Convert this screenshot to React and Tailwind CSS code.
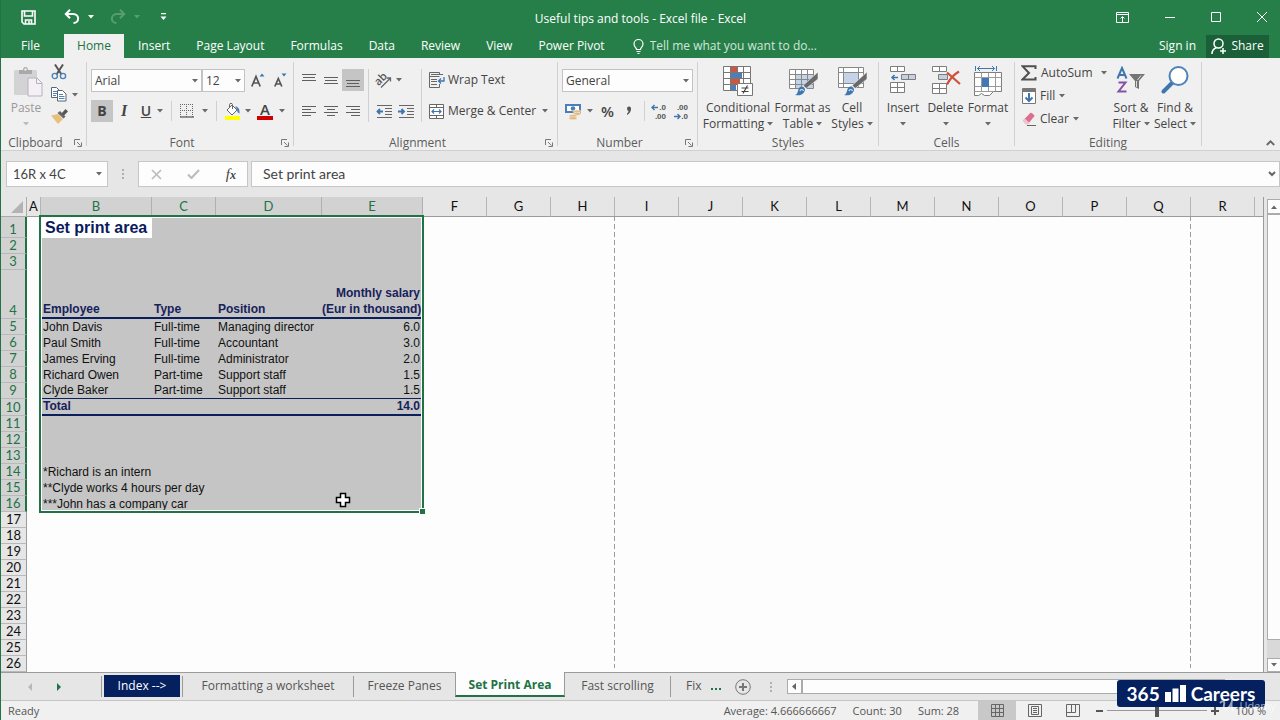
import React, { useState } from 'react';

// ==================================================================
// Sheet data
// ==================================================================
const columns = [
  { id: 'A', width: 'w-[14px]' },
  { id: 'B', width: 'w-[111px]', selected: true },
  { id: 'C', width: 'w-[64px]', selected: true },
  { id: 'D', width: 'w-[106px]', selected: true },
  { id: 'E', width: 'w-[101px]', selected: true },
  ...'FGHIJKLMNOPQR'.split('').map((id) => ({ id, width: 'w-[64px]' })),
];

const lastSelectedRow = 16;

const cells = {
  1: { B: 'Set print area' },
  4: { B: 'Employee', C: 'Type', D: 'Position' },
  5: { B: 'John Davis', C: 'Full-time', D: 'Managing director', E: '6.0' },
  6: { B: 'Paul Smith', C: 'Full-time', D: 'Accountant', E: '3.0' },
  7: { B: 'James Erving', C: 'Full-time', D: 'Administrator', E: '2.0' },
  8: { B: 'Richard Owen', C: 'Part-time', D: 'Support staff', E: '1.5' },
  9: { B: 'Clyde Baker', C: 'Part-time', D: 'Support staff', E: '1.5' },
  10: { B: 'Total', E: '14.0' },
  14: { B: '*Richard is an intern' },
  15: { B: '**Clyde works 4 hours per day' },
  16: { B: '***John has a company car' },
};

const rowHeights = { 1: 'h-[21px]', 4: 'h-[49px]', 10: 'h-[17px]' };

const rowStyles = {
  4: 'border-b-2 border-[#0a1f5c] font-bold text-[#16215c]',
  9: 'border-b border-[#0a1f5c]',
  10: 'border-b-2 border-[#0a1f5c] font-bold text-[#16215c]',
};

const menuTabs = ['Insert', 'Page Layout', 'Formulas', 'Data', 'Review', 'View', 'Power Pivot'];

// ==================================================================
// Small pieces
// ==================================================================
const Caret = ({ className = 'text-[#6a6a6a]' }) => (
  <svg width="6" height="4" viewBox="0 0 6 4" className={`shrink-0 ${className}`}>
    <path d="M0 0h6L3 3.5z" fill="currentColor" />
  </svg>
);

const Divider = ({ className = 'bg-[#d0d0d0]' }) => <div className={`w-px shrink-0 ${className}`} />;

const Dots = ({ className }) => (
  <svg width="2" height="10" viewBox="0 0 2 10" fill="#b0b0b0" className={`shrink-0 self-center ${className}`}>
    <path d="M0 0h2v2H0zM0 4h2v2H0zM0 8h2v2H0z" />
  </svg>
);

const Launcher = ({ label }) => (
  <button aria-label={label} className="text-[#777]">
    <svg width="8" height="8" viewBox="0 0 8 8" fill="none" stroke="currentColor">
      <path d="M.5 6V.5H6M3 3l3.5 3.5M7.5 3.5v4h-4" />
    </svg>
  </button>
);

const Group = ({ title, width, launcher, children }) => (
  <>
    <section aria-label={title} className={`flex shrink-0 flex-col ${width}`}>
      <div className="h-[77px]">{children}</div>
      <div className="flex h-[15px] items-center px-1 leading-[15px] text-[#5c5c5c]">
        <span className={`flex-1 text-center ${launcher ? 'pr-2' : ''}`}>{title}</span>
        {launcher && <Launcher label={`${title} settings`} />}
      </div>
    </section>
    <Divider className="my-1 bg-[#d0d0d0]" />
  </>
);

const Tool = ({ label, active, children }) => (
  <button
    aria-label={label}
    className={`flex h-[22px] w-[22px] shrink-0 items-center justify-center ${active ? 'bg-[#c5c5c5]' : ''}`}
  >
    {children}
  </button>
);

const BigButton = ({ icon, lines, width }) => (
  <button className={`flex shrink-0 flex-col items-center pt-2 leading-4 whitespace-nowrap ${width}`}>
    <span className="flex h-[34px] items-start justify-center">{icon}</span>
    <span>{lines[0]}</span>
    <span className="flex h-4 items-center gap-[3px]">
      {lines[1]}
      <Caret />
    </span>
  </button>
);

const Combo = ({ label, value, width }) => (
  <div className={`relative flex h-[23px] items-center ${width}`}>
    <select
      aria-label={label}
      defaultValue={value}
      className="h-full w-full appearance-none border border-[#c3c3c3] bg-[#fdfdfd] px-[3px] text-[12px] leading-4 text-[#444] outline-none"
    >
      <option>{value}</option>
    </select>
    <Caret className="pointer-events-none absolute right-1 text-[#6a6a6a]" />
  </div>
);

// Horizontal rules used by every alignment icon: [x, width] per line
const Lines = ({ rows, top = 1 }) => (
  <svg width="14" height="13" viewBox="0 0 14 13" shapeRendering="crispEdges">
    {rows.map(([x, w], i) => (
      <rect key={i} x={x} y={top + i * 3} width={w} height="1" fill="#5f5f5f" />
    ))}
  </svg>
);

const Indent = ({ flip }) => (
  <svg width="17" height="13" viewBox="0 0 17 13">
    <path d="M1 .5h15M9 3.5h7M9 6.5h7M9 9.5h7M1 12.5h15" stroke="#666" />
    <path
      d={flip ? 'M0 6.5h6M3.5 4L6 6.5 3.5 9' : 'M7 6.5H1.5M4 4L1.5 6.5 4 9'}
      fill="none"
      stroke="#3f76b0"
      strokeWidth="1.8"
    />
  </svg>
);

const DecimalIcon = ({ increase }) => (
  <svg width="16" height="19" viewBox="0 0 16 19" fontFamily="Liberation Sans, sans-serif" fontSize="8" fontWeight="bold" fill="#555">
    <text x="15" y="8" textAnchor="end">{increase ? '.0' : '.00'}</text>
    <text x="15" y="17" textAnchor="end">{increase ? '.00' : '.0'}</text>
    <path
      d={increase ? 'M7 5.5H1M3.5 3L1 5.500l2.500 2.500' : 'M1 14.5h6M4.500 12l2.500 2.500L4.500 17'}
      fill="none"
      stroke="#3f76b0"
      strokeWidth="1.4"
    />
  </svg>
);

// ==================================================================
// Ribbon icons
// ==================================================================
const PasteIcon = () => (
  <svg width="30" height="32" viewBox="0 0 30 32">
    <rect x="1" y="4" width="23" height="25" rx="1.5" fill="#d3d3d6" />
    <path d="M6 4h4c0-4 5-4 5 0h4v4H6z" fill="#a9a9a9" />
    <circle cx="12.5" cy="3.5" r="1.2" fill="#eee" />
    <path d="M15 12h9l5 5v13H15z" fill="#f5f0f5" stroke="#b9b0bd" />
    <path d="M23.5 12v5.5H29" fill="none" stroke="#b9b0bd" />
  </svg>
);

const CutIcon = () => (
  <svg width="16" height="16" viewBox="0 0 16 16" fill="none">
    <path d="M4 .5l6.5 10M12 .5l-6.5 10" stroke="#565656" strokeWidth="2" />
    <circle cx="3.800" cy="12" r="2.600" stroke="#4c82b8" strokeWidth="1.4" />
    <circle cx="12" cy="12" r="2.600" stroke="#4c82b8" strokeWidth="1.4" />
  </svg>
);

const CopyIcon = () => (
  <svg width="16" height="15" viewBox="0 0 16 15" fill="#fff" stroke="#5a6570">
    <path d="M.5.5h5l3 3v7h-8z" />
    <path d="M2 4.5h4M2 6.5h4M2 8.5h3" stroke="#4c82b8" />
    <path d="M6.5 3.5h5L15 7v7H6.5z" />
    <path d="M8 7.5h4M8 9.5h5.5M8 11.5h5.5" stroke="#4c82b8" />
  </svg>
);

const PainterIcon = () => (
  <svg width="17" height="15" viewBox="0 0 17 15">
    <path d="M0 6.5L7 5l5 5-5 5z" fill="#e9bf7c" />
    <path d="M6.500 4l2.500-2 5.500 5.500-2 2z" fill="#666" />
    <path d="M10.500 4.500L14.500 0 17 2.500l-4 4z" fill="#555" />
  </svg>
);

const BordersIcon = () => (
  <svg width="14" height="14" viewBox="0 0 14 14" stroke="#666">
    <path d="M0 .5h14M0 6.5h14M.5 0v13M6.5 0v13M12.5 0v13" strokeDasharray="1 1" />
    <path d="M0 13h14" strokeWidth="1.4" />
  </svg>
);

const FillColorIcon = () => (
  <svg width="17" height="17" viewBox="0 0 17 17" fill="none">
    <path d="M3 7l5-5 5 5-5 5z" fill="#fff" stroke="#666" />
    <path d="M5.5 5V1.500c0-1.500 3-1.500 3 0V6" stroke="#666" />
    <path d="M11 3.500c3 0 5 2 4.500 7-2-.5-2.500-2-2.500-4z" fill="#4c82b8" />
    <path d="M1 13h15v4H1z" fill="#ff0" />
  </svg>
);

const OrientationIcon = () => (
  <svg width="17" height="17" viewBox="0 0 17 17" className="overflow-visible">
    <text x="1" y="12" fontSize="11" fontWeight="600" fontFamily="Open Sans, sans-serif" fill="#555" transform="rotate(-45 5 10)">ab</text>
    <path d="M6 15.5L15.500 6M12 6h3.500v3.500" fill="none" stroke="#666" strokeWidth="1.3" />
  </svg>
);

const WrapIcon = () => (
  <svg width="16" height="16" viewBox="0 0 16 16" fill="none">
    <path d="M10.5 3V.5H.5v15h10V12M.5 4.500h10" stroke="#666" />
    <path d="M2 2.500h12M2 7.500h6M2 9.500h6M2 12.500h6" stroke="#666" />
    <path d="M15 5v4h-5M12 6.500L9.500 9l2.500 2.500" stroke="#3f76b0" strokeWidth="1.3" />
  </svg>
);

const MergeIcon = () => (
  <svg width="16" height="15" viewBox="0 0 16 15" fill="#fff">
    <path d="M.5.5h14v14H.5zM.5 3.500h14M.5 11.500h14M7.500.5v3M7.500 11.500v3" stroke="#666" />
    <path d="M3 7.500h9M5 5.500l-2 2 2 2M10 5.500l2 2-2 2" fill="none" stroke="#3f76b0" strokeWidth="1.2" />
  </svg>
);

const CurrencyIcon = () => (
  <svg width="17" height="17" viewBox="0 0 17 17">
    <path d="M0 1h16v9H0z" fill="#4c7fb5" />
    <path d="M2 3h12v5H2z" fill="#fff" />
    <circle cx="8" cy="5.500" r="2.300" fill="#4c7fb5" />
    <g fill="#e6b878" stroke="#f0f0f0" strokeWidth=".6">
      <ellipse cx="12" cy="8.500" rx="4" ry="1.600" />
      <ellipse cx="12" cy="10.800" rx="4" ry="1.600" />
      <ellipse cx="8" cy="13" rx="4" ry="1.600" />
      <ellipse cx="8" cy="15.200" rx="4" ry="1.600" />
    </g>
  </svg>
);

const ConditionalIcon = () => (
  <svg width="30" height="31" viewBox="0 0 30 31">
    <path d="M.5.5h27v24H.5z" fill="#fff" />
    <path d="M8 1h6v5H8zM8 13h9v5H8z" fill="#cf553f" />
    <path d="M8 7h11v5H8zM8 19h5v5H8z" fill="#4c7fb5" />
    <path d="M.5.5h27v24H.5zM.5 6.500h27M.5 12.500h27M.5 18.500h27M7.500.5v24M14.500.5v6M20.500.5v24" fill="none" stroke="#777" />
    <path d="M14.500 17.500h15v12h-15z" fill="#fff" stroke="#777" />
    <path d="M18.500 22h7M18.500 25.500h7M24.500 19.500l-4.500 8" stroke="#444" strokeWidth="1.2" />
  </svg>
);

// Paint brush laid over the table icons
const Brush = () => (
  <g>
    <path d="M30 6v7l-12.500 10-3-3z" fill="#6a6a6a" stroke="#eee" strokeWidth=".6" />
    <path d="M15 19l3.500 3.500-1.500 1.500-3.500-3.500z" fill="#f4f4f4" />
    <path d="M7 29c4-1 2-7 6-8.500 3-.5 5 2.500 3.500 5C15 29 10 30 7 29z" fill="#3f76b0" />
    <path d="M12 25c.5-2 3-2 3.500 0" fill="none" stroke="#dbe7f4" strokeWidth="1.2" />
  </g>
);

const TableIcon = () => (
  <svg width="30" height="31" viewBox="0 0 30 31">
    <path d="M1.500 3.500h24v19h-24z" fill="#fff" />
    <path d="M8 8h17v14H8z" fill="#c5d3e8" />
    <path d="M1.500 3.500h24v19h-24zM1.500 8.500h24M1.500 13.500h24M1.500 18.500h24M7.500 3.500v19M13.500 3.500v19M19.500 3.500v19" fill="none" stroke="#888" />
    <Brush />
  </svg>
);

const CellStyleIcon = () => (
  <svg width="30" height="31" viewBox="0 0 30 31">
    <path d="M1.500 1.500h25v20h-25z" fill="#fff" />
    <path d="M7 7h14v10H7z" fill="#c5d3e8" />
    <path d="M1.500 1.500h25v20h-25zM1.500 6.500h25M1.500 17.500h25M6.500 1.500v20M21.500 1.500v20" fill="none" stroke="#888" />
    <Brush />
  </svg>
);

const InsertIcon = () => (
  <svg width="28" height="30" viewBox="0 0 28 30" fill="#fff" stroke="#7d7d7d">
    <path d="M1.500.5h14v5h-14zM8.500.5v5M1.500 16.500h14v10h-14zM1.500 21.500h14M8.500 16.500v10" />
    <path d="M12.500 8.500h14v5h-14zM19.500 8.500v5" fill="#c9cfe2" />
    <path d="M9 11.500H3M5.500 9L3 11.500 5.500 14" fill="none" stroke="#3f76b0" strokeWidth="1.5" />
  </svg>
);

const DeleteIcon = () => (
  <svg width="30" height="30" viewBox="0 0 30 30" fill="#fff" stroke="#7d7d7d">
    <path d="M1.500.5h14v5h-14zM8.500.5v5M1.500 17.500h14v10h-14zM1.500 22.500h14M8.500 17.500v10" />
    <path d="M7.500 8.500h9v5h-9z" fill="#c9cfe2" />
    <path d="M16 6.500L29 18M28 5.500c-5 3-9 7-12 13" fill="none" stroke="#cf4f3c" strokeWidth="2.2" />
  </svg>
);

const FormatIcon = () => (
  <svg width="30" height="32" viewBox="0 0 30 32" fill="none">
    <path d="M2.500 0v5M23.500 0v5M4 2.500h18M7 0L4.500 2.500 7 5M19 0l2.500 2.500L19 5" stroke="#3f76b0" />
    <path d="M1.500 6.500h27v19h-8l-4 4h-5l-3-2-3 2h-4z" fill="#fff" stroke="#7d7d7d" />
    <path d="M1.500 11.500h27M1.500 20.500h27M8.500 6.500v19M15.500 6.500v19M22.500 6.500v19M1.500 25.500h19" stroke="#9a9a9a" />
    <path d="M9 12h7v9H9z" fill="#4178b5" />
  </svg>
);

const SigmaIcon = () => (
  <svg width="16" height="16" viewBox="0 0 16 16">
    <path d="M14.500 4V1.200H1.500L8 8l-6.500 6.500h13V12" fill="none" stroke="#505050" strokeWidth="2" />
  </svg>
);

const FillDownIcon = () => (
  <svg width="15" height="16" viewBox="0 0 15 16" fill="none">
    <path d="M1.500.5h13v15h-13z" fill="#fff" stroke="#777" />
    <path d="M2 1h12v3H2z" fill="#777" />
    <path d="M8 5v8M4.500 9.500L8 13l3.500-3.500" stroke="#3f76b0" strokeWidth="2" />
  </svg>
);

const EraserIcon = () => (
  <svg width="15" height="15" viewBox="0 0 15 15">
    <path d="M2 8.500L9.500.8c.6-.6 4.500 2.500 4 3.200L7 12H5z" fill="#d9708f" />
    <path d="M2 8.500l2-2L8.500 11 7 12.500H4.500z" fill="#efc3d0" />
    <path d="M6 13.500h9" stroke="#666" />
  </svg>
);

const SortIcon = () => (
  <svg width="30" height="31" viewBox="0 0 30 31">
    <path d="M1.500 12.500L6 2l4.500 10.500M3 9h6" fill="none" stroke="#3f76b0" strokeWidth="2" />
    <path d="M2.500 16.500h7l-7 9h8" fill="none" stroke="#8650a8" strokeWidth="2" />
    <path d="M13 8h16l-6 7v8l-4-2v-6z" fill="#757575" />
    <path d="M20.500 15v6M25 9.500L21.500 14" stroke="#ddd" />
  </svg>
);

const FindIcon = () => (
  <svg width="28" height="30" viewBox="0 0 28 30">
    <path d="M2.500 25.500l9-9" stroke="#3f76b0" strokeWidth="4" strokeLinecap="round" />
    <circle cx="17.500" cy="10" r="9" fill="#fff" stroke="#4c82b8" strokeWidth="2" />
  </svg>
);

// ==================================================================
// Title bar + tabs
// ==================================================================
const TitleBar = () => (
  <header className="relative flex h-[34px] items-center justify-between pl-5 text-white">
    <div className="flex items-center">
      <button aria-label="Save">
        <svg width="15" height="15" viewBox="0 0 15 15" fill="none" stroke="currentColor" strokeWidth="1.6">
          <path d="M1 1h13v13H3L1 12zM3.500 1v5h8V1M4.500 14v-4h6v4M8 11v3" />
        </svg>
      </button>
      <button aria-label="Undo" className="ml-7 flex items-center gap-2">
        <svg width="16" height="16" viewBox="0 0 16 16" fill="none" stroke="currentColor" strokeWidth="2">
          <path d="M6 .8L1.800 5 6 9.200M2 5h7c7 0 6.500 9 .5 9" />
        </svg>
        <Caret className="text-white" />
      </button>
      <button aria-label="Redo" className="ml-4 flex items-center gap-2 text-[#5a9c72]">
        <svg width="16" height="16" viewBox="0 0 16 16" fill="none" stroke="currentColor" strokeWidth="2">
          <path d="M10 .8L14.200 5 10 9.200M14 5H7C0 5 .5 14 6.500 14" />
        </svg>
        <Caret className="text-[#5a9c72]" />
      </button>
      <button aria-label="Customize Quick Access Toolbar" className="ml-5">
        <svg width="7" height="8" viewBox="0 0 7 8" fill="currentColor">
          <path d="M1 0h5v1.200H1zM.5 3.500h6l-3 3.500z" />
        </svg>
      </button>
    </div>
    <h1 className="absolute inset-x-0 top-[11px] mx-auto w-fit leading-4">Useful tips and tools - Excel file - Excel</h1>
    <div className="flex items-center pr-[13px]">
      <button aria-label="Ribbon Display Options">
        <svg width="13" height="11" viewBox="0 0 13 11" fill="none" stroke="currentColor">
          <path d="M.5.5h12v10H.5zM.5 2.500h12M6.500 10V5M4.500 6.500l2-2 2 2" />
        </svg>
      </button>
      <button aria-label="Minimize" className="ml-9">
        <svg width="10" height="10" viewBox="0 0 10 10" stroke="currentColor"><path d="M0 5.500h10" /></svg>
      </button>
      <button aria-label="Maximize" className="ml-9">
        <svg width="10" height="10" viewBox="0 0 10 10" fill="none" stroke="currentColor"><path d="M.5.5h9v9h-9z" /></svg>
      </button>
      <button aria-label="Close" className="ml-9">
        <svg width="10" height="10" viewBox="0 0 10 10" stroke="currentColor"><path d="M0 0l10 10M10 0L0 10" /></svg>
      </button>
    </div>
  </header>
);

const MenuTabs = () => (
  <nav className="flex h-6 items-center pr-[11px] leading-4 text-white">
    <div className="flex w-[63px] justify-center pr-1">
      <button>File</button>
    </div>
    <button className="flex h-6 w-[60px] items-center justify-center bg-[#f0f0f0] text-[#217346]">Home</button>
    <div className="flex gap-[26px] pl-[14px]">
      {menuTabs.map((tab) => (
        <button key={tab}>{tab}</button>
      ))}
    </div>
    <svg width="11" height="15" viewBox="0 0 11 15" fill="none" stroke="currentColor" className="ml-7 shrink-0">
      <path d="M3.500 10.500C3.500 8.500 1 8 1 5a4.500 4.500 0 019 0c0 3-2.500 3.500-2.500 5.500zM3.500 12.500h4M4.500 14.500h2" strokeWidth="1.2" />
    </svg>
    <input
      aria-label="Tell me what you want to do"
      placeholder="Tell me what you want to do..."
      className="ml-[6px] w-48 bg-transparent outline-none placeholder:text-[#d3e6da]"
    />
    <button className="ml-auto pr-[10px]">Sign in</button>
    <button className="flex h-[23px] w-[63px] items-center justify-center gap-1 bg-[#1a5f37]">
      <svg width="16" height="17" viewBox="0 0 16 17" fill="none" stroke="currentColor" strokeWidth="1.5">
        <circle cx="7.500" cy="5.500" r="4.500" />
        <path d="M1 16c0-4 2-5.500 4.500-6.500M12 10v6M9 13h6" />
      </svg>
      Share
    </button>
  </nav>
);

// ==================================================================
// Ribbon
// ==================================================================
const Ribbon = () => (
  <div className="flex h-[93px] overflow-hidden border-b border-[#d0d0d0] bg-[#f0f0f0] text-[#444]">
    <Group title="Clipboard" width="w-[85px]" launcher>
      <div className="flex">
        <button className="flex w-[50px] flex-col items-center pt-2 leading-4 text-[#999]">
          <span className="h-[34px] pl-1"><PasteIcon /></span>
          Paste
          <span className="flex h-4 items-center"><Caret className="text-[#bbb]" /></span>
        </button>
        <div className="flex flex-col gap-[7px] pt-[6px]">
          <button aria-label="Cut"><CutIcon /></button>
          <button aria-label="Copy" className="flex items-center gap-[5px]"><CopyIcon /><Caret /></button>
          <button aria-label="Format Painter"><PainterIcon /></button>
        </div>
      </div>
    </Group>

    <Group title="Font" width="w-[206px]" launcher>
      <div className="flex flex-col gap-2 pt-[11px] pl-1">
        <div className="flex h-[23px] items-center">
          <Combo label="Font" value="Arial" width="w-[111px]" />
          <Combo label="Font size" value="12" width="w-[43px]" />
          <button aria-label="Increase font size" className="ml-[6px]">
            <svg width="15" height="16" viewBox="0 0 15 16" fill="none">
              <path d="M.8 13.500L5 3.500l4.200 10M2.500 10h5" stroke="#555" strokeWidth="1.7" />
              <path d="M8.500 3.500h5L11 .5z" fill="#3f76b0" />
            </svg>
          </button>
          <button aria-label="Decrease font size" className="ml-2">
            <svg width="14" height="16" viewBox="0 0 14 16" fill="none">
              <path d="M.8 13.500L4.300 5.500l3.500 8M2 11h4.500" stroke="#555" strokeWidth="1.7" />
              <path d="M7.500.5h5L10 3.500z" fill="#3f76b0" />
            </svg>
          </button>
        </div>
        <div className="flex h-[22px] items-center">
          <Tool label="Bold" active><b className="text-[14px] leading-4">B</b></Tool>
          <Tool label="Italic"><i className="font-['Liberation_Serif',serif] text-[16px] leading-4 font-bold">I</i></Tool>
          <Tool label="Underline"><u className="text-[14px] leading-4 font-semibold">U</u></Tool>
          <Caret />
          <Divider className="ml-2 h-5 bg-[#d0d0d0]" />
          <button aria-label="Borders" className="ml-2 flex items-center gap-2"><BordersIcon /><Caret /></button>
          <Divider className="ml-2 h-5 bg-[#d0d0d0]" />
          <button aria-label="Fill color" className="ml-[7px] flex items-center gap-1"><FillColorIcon /><Caret /></button>
          <button aria-label="Font color" className="ml-[6px] flex items-center gap-[6px]">
            <span className="flex w-4 flex-col items-center border-b-4 border-[#d00000] text-[15px] leading-[13px] font-semibold">A</span>
            <Caret />
          </button>
        </div>
      </div>
    </Group>

    <Group title="Alignment" width="w-[263px]" launcher>
      <div className="flex pt-[11px] pl-1">
        <div className="flex w-[66px] flex-col gap-[9px]">
          <div className="flex">
            <Tool label="Top align"><Lines top={0} rows={[[0, 14], [1, 12], [0, 14]]} /></Tool>
            <Tool label="Middle align"><Lines top={3} rows={[[0, 14], [1, 12], [0, 14]]} /></Tool>
            <Tool label="Bottom align" active><Lines top={6} rows={[[0, 14], [1, 12], [0, 14]]} /></Tool>
          </div>
          <div className="flex">
            <Tool label="Align left"><Lines rows={[[0, 14], [0, 9], [0, 14], [0, 9]]} /></Tool>
            <Tool label="Center"><Lines rows={[[0, 14], [3, 8], [0, 14], [3, 8]]} /></Tool>
            <Tool label="Align right"><Lines rows={[[0, 14], [5, 9], [0, 14], [5, 9]]} /></Tool>
          </div>
        </div>
        <Divider className="ml-1 h-[53px] bg-[#d0d0d0]" />
        <div className="flex w-[52px] flex-col gap-[9px] pl-1">
          <button aria-label="Orientation" className="flex h-[22px] items-center gap-1 pl-[2px]"><OrientationIcon /><Caret /></button>
          <div className="flex">
            <Tool label="Decrease indent"><Indent /></Tool>
            <Tool label="Increase indent"><Indent flip /></Tool>
          </div>
        </div>
        <Divider className="h-[53px] bg-[#d0d0d0]" />
        <div className="flex flex-1 flex-col gap-[9px] pl-[7px] leading-4 whitespace-nowrap">
          <button className="flex h-[22px] items-center gap-[3px]"><WrapIcon />Wrap Text</button>
          <button className="flex h-[22px] items-center gap-[3px]">
            <MergeIcon />
            Merge &amp; Center
            <Caret className="mr-[9px] ml-auto text-[#6a6a6a]" />
          </button>
        </div>
      </div>
    </Group>

    <Group title="Number" width="w-[139px]" launcher>
      <div className="flex flex-col gap-2 pt-[11px] pl-1">
        <Combo label="Number format" value="General" width="w-[131px]" />
        <div className="flex h-[22px] items-center">
          <button aria-label="Accounting format" className="ml-[3px] flex items-center gap-[5px]"><CurrencyIcon /><Caret /></button>
          <button aria-label="Percent style" className="ml-2 text-[15px] leading-4 font-semibold">%</button>
          <button aria-label="Comma style" className="ml-3">
            <svg width="6" height="10" viewBox="0 0 6 10"><path d="M1 2a2 2 0 114 1C5 6 3 8 1 9V7.500c1-.7 1.500-1.500 1.500-2.500C1.500 5 1 3.500 1 2z" fill="#555" /></svg>
          </button>
          <Divider className="ml-3 h-5 bg-[#d0d0d0]" />
          <button aria-label="Increase decimal" className="ml-[6px]"><DecimalIcon increase /></button>
          <button aria-label="Decrease decimal" className="ml-[6px]"><DecimalIcon /></button>
        </div>
      </div>
    </Group>

    <Group title="Styles" width="w-[180px]">
      <div className="flex justify-between pr-[6px] pl-[5px]">
        <BigButton width="w-[70px]" icon={<ConditionalIcon />} lines={['Conditional', 'Formatting']} />
        <BigButton width="w-[58px]" icon={<TableIcon />} lines={['Format as', 'Table']} />
        <BigButton width="w-[40px]" icon={<CellStyleIcon />} lines={['Cell', 'Styles']} />
      </div>
    </Group>

    <Group title="Cells" width="w-[135px]">
      <div className="flex pl-[3px]">
        <BigButton width="w-[42px]" icon={<InsertIcon />} lines={['Insert', '']} />
        <BigButton width="w-[43px]" icon={<DeleteIcon />} lines={['Delete', '']} />
        <BigButton width="w-[42px]" icon={<FormatIcon />} lines={['Format', '']} />
      </div>
    </Group>

    <Group title="Editing" width="w-[186px]">
      <div className="flex">
        <div className="flex w-[92px] flex-col gap-[7px] pt-[7px] pl-[6px] leading-4">
          <button className="flex items-center gap-1"><SigmaIcon />AutoSum<Caret className="ml-auto text-[#6a6a6a]" /></button>
          <button className="flex items-center gap-1"><FillDownIcon />Fill<Caret /></button>
          <button className="flex items-center gap-1"><EraserIcon />Clear<Caret /></button>
        </div>
        <BigButton width="w-[48px]" icon={<SortIcon />} lines={['Sort &', 'Filter']} />
        <BigButton width="w-[40px]" icon={<FindIcon />} lines={['Find &', 'Select']} />
      </div>
    </Group>

    <button aria-label="Collapse the ribbon" className="mt-auto mr-[5px] mb-1 ml-auto">
      <svg width="9" height="6" viewBox="0 0 9 6" fill="none" stroke="#666" strokeWidth="1.8"><path d="M.8 5L4.500 1.300 8.200 5" /></svg>
    </button>
  </div>
);

const FormulaBar = () => {
  const [formula, setFormula] = useState('Set print area');

  return (
    <div className="flex h-[46px] items-center pl-[5px] font-['Lato','Carlito',sans-serif] text-[14px] text-[#444]">
      <div className="flex h-[26px] w-[102px] items-center border border-[#c6c6c6] bg-[#fdfdfd] pr-[5px]">
        <input aria-label="Name box" defaultValue="16R x 4C" className="w-full min-w-0 bg-transparent pl-[6px] text-[13px] leading-4 outline-none" />
        <Caret />
      </div>
      <Dots className="mx-[14px]" />
      <div className="flex h-[26px] w-[110px] shrink-0 items-center justify-between border border-[#c6c6c6] bg-[#fdfdfd] pr-[11px] pl-3">
        <button aria-label="Cancel">
          <svg width="11" height="11" viewBox="0 0 11 11" stroke="#bdbdbd" strokeWidth="1.7"><path d="M1 1l9 9M10 1l-9 9" /></svg>
        </button>
        <button aria-label="Enter">
          <svg width="13" height="10" viewBox="0 0 13 10" fill="none" stroke="#bdbdbd" strokeWidth="2.2"><path d="M1 5.500L4.500 9 12 1" /></svg>
        </button>
        <button aria-label="Insert function" className="font-['Liberation_Serif',serif] text-[15px] leading-4 italic">
          f<span className="text-[12px] font-bold">x</span>
        </button>
      </div>
      <div className="ml-[3px] flex h-[26px] flex-1 items-center border border-[#c6c6c6] bg-[#fdfdfd] pr-[3px]">
        <input
          aria-label="Formula"
          value={formula}
          onChange={(e) => setFormula(e.target.value)}
          className="flex-1 bg-transparent pl-[11px] leading-4 outline-none"
        />
        <svg width="8" height="6" viewBox="0 0 8 6" fill="none" stroke="#666" strokeWidth="2"><path d="M1 1l3 3 3-3" /></svg>
      </div>
    </div>
  );
};

// ==================================================================
// Worksheet
// ==================================================================
const cellClass = (row, col) => {
  if (!col.selected || row > lastSelectedRow) return 'bg-[#fdfdfd] p-0';
  const classes = ['py-0 pl-[2px] whitespace-nowrap align-bottom'];
  classes.push(
    row === 1 && col.id === 'B' ? 'bg-white indent-[2px] text-[16px] leading-5 font-bold text-[#0a1a5c]' : 'bg-[#c5c5c5]'
  );
  classes.push(col.id === 'E' ? 'pr-[3px] text-right' : 'pr-0');
  if (rowStyles[row]) classes.push(rowStyles[row]);
  return classes.join(' ');
};

const Sheet = () => (
  <div className="flex min-h-0 flex-1">
    <div className="relative min-w-0 flex-1 overflow-hidden border-r border-[#9b9b9b]">
      <table className="w-full table-fixed border-separate border-spacing-0 font-['Liberation_Sans',Arial,sans-serif] text-[12px] leading-[15px] text-[#111]">
        <thead className="font-['Lato','Carlito',sans-serif] text-[13px] leading-[19px]">
          <tr>
            <th className="h-5 w-[26px] border-r border-b border-[#ababab] bg-[#e6e6e6] p-0">
              <svg width="12" height="12" viewBox="0 0 12 12" className="mr-[3px] ml-auto"><path d="M12 0v12H0z" fill="#b3b3b3" /></svg>
            </th>
            {columns.map((col) => (
              <th
                key={col.id}
                scope="col"
                className={`h-5 border-r border-b p-0 text-center font-normal ${col.width} ${
                  col.selected
                    ? 'border-r-[#b0b0b0] border-b-[#217346] bg-[#d2d2d2] text-[#217346]'
                    : 'border-r-[#b5b5b5] border-b-[#9b9b9b] bg-[#e6e6e6]'
                }`}
              >
                {col.id}
              </th>
            ))}
            <th className="border-b border-[#9b9b9b] bg-[#e6e6e6] p-0" />
          </tr>
        </thead>
        <tbody>
          {Array.from({ length: 26 }, (_, i) => i + 1).map((row) => (
            <tr key={row}>
              <th
                scope="row"
                className={`border-b border-b-[#b9b9b9] p-0 text-center align-bottom font-['Lato','Carlito',sans-serif] text-[13px] font-normal ${
                  rowHeights[row] || 'h-4'
                } ${
                  row <= lastSelectedRow
                    ? 'border-r-2 border-r-[#217346] bg-[#d2d2d2] text-[#217346]'
                    : 'border-r border-r-[#9b9b9b] bg-[#e6e6e6]'
                }`}
              >
                {row}
              </th>
              {columns.map((col) => (
                <td key={col.id} className={cellClass(row, col)}>
                  {row === 4 && col.id === 'E' ? (
                    <div className="-ml-[2px] leading-4">Monthly salary<br />(Eur in thousand)</div>
                  ) : (
                    cells[row]?.[col.id]
                  )}
                </td>
              ))}
              <td className="bg-[#fdfdfd] p-0" />
            </tr>
          ))}
        </tbody>
      </table>

      {/* Selection outline with its fill handle */}
      <div className="pointer-events-none absolute top-[18px] left-[38px] h-[298px] w-[385px] border-2 border-[#217346]">
        <div className="h-full w-full border border-white" />
        <div className="absolute -right-[3px] -bottom-[3px] h-[6px] w-[6px] border-t border-l border-white bg-[#217346]" />
      </div>

      {/* Page breaks */}
      <div className="pointer-events-none absolute top-[19px] bottom-1 left-[613px] w-px bg-[repeating-linear-gradient(#9b9b9b_0_5px,transparent_5px_8px)]" />
      <div className="pointer-events-none absolute top-[19px] bottom-1 left-[1189px] w-px bg-[repeating-linear-gradient(#9b9b9b_0_5px,transparent_5px_8px)]" />

      {/* Mouse pointer */}
      <svg width="16" height="16" viewBox="0 0 16 16" className="pointer-events-none absolute top-[295px] left-[334px]">
        <path d="M5.500 1.500h5v4h4v5h-4v4h-5v-4h-4v-5h4z" fill="#fff" stroke="#000" strokeWidth="1.5" />
      </svg>
    </div>

    <div className="ml-[3px] flex w-[13px] flex-col pt-[2px]">
      <button aria-label="Scroll up" className="flex h-[15px] items-center justify-center border border-r-0 border-[#ababab] bg-[#fdfdfd]">
        <Caret className="rotate-180 text-[#666]" />
      </button>
      <div className="flex flex-1 flex-col bg-[#d9d9d9]">
        <div className="h-[96%] border border-r-0 border-[#ababab] bg-[#fdfdfd]" />
      </div>
      <button aria-label="Scroll down" className="flex h-[14px] items-center justify-center border border-r-0 border-[#ababab] bg-[#fdfdfd]">
        <Caret />
      </button>
    </div>
  </div>
);

const SheetTabs = () => (
  <div className="flex h-7 shrink-0 border-t border-[#9b9b9b] pr-[55px] leading-4 whitespace-nowrap text-[#555]">
    <div className="flex w-[100px] items-center gap-[25px] pl-[27px]">
      <button aria-label="Previous sheet"><svg width="4" height="8" viewBox="0 0 4 8" className="fill-[#b8b8b8]"><path d="M4 0v8L0 4z" /></svg></button>
      <button aria-label="Next sheet"><svg width="4" height="8" viewBox="0 0 4 8" className="fill-[#217346]"><path d="M0 0v8l4-4z" /></svg></button>
    </div>
    <Divider className="my-[3px] bg-[#9b9b9b]" />
    <button className="mx-[2px] mt-[2px] mb-[3px] w-[76px] bg-[#04205f] text-white">Index --&gt;</button>
    <Divider className="my-[3px] bg-[#9b9b9b]" />
    <button className="w-[170px] pb-[2px]">Formatting a worksheet</button>
    <Divider className="my-[3px] bg-[#9b9b9b]" />
    <button className="w-[101px] pb-[2px]">Freeze Panes</button>
    <button className="-mt-px mb-[3px] w-[110px] border-x border-b-2 border-x-[#9b9b9b] border-b-[#217346] bg-[#fdfdfd] pt-[2px] font-bold text-[#217346]">
      Set Print Area
    </button>
    <button className="w-[105px] pb-[2px]">Fast scrolling</button>
    <Divider className="my-[3px] bg-[#9b9b9b]" />
    <button className="pr-[9px] pb-[2px] pl-[15px]">Fix</button>
    <button aria-label="More sheets" className="w-[11px] pt-1">
      <svg width="11" height="2" viewBox="0 0 11 2" className="fill-[#217346]"><path d="M0 0h2v2H0zM4 0h2v2H4zM8 0h2v2H8z" /></svg>
    </button>
    <button aria-label="New sheet" className="ml-[13px]">
      <svg width="16" height="16" viewBox="0 0 16 16" fill="none" stroke="#777">
        <circle cx="8" cy="8" r="7.300" />
        <path d="M8 4v8M4 8h8" strokeWidth="2" />
      </svg>
    </button>
    <Dots className="mr-[15px] ml-[19px]" />
    <div className="my-[6px] flex flex-1 border border-[#ababab] bg-[#fdfdfd]">
      <button aria-label="Scroll left" className="flex w-[15px] items-center justify-center border-r-2 border-[#ababab]">
        <svg width="4" height="7" viewBox="0 0 4 7" fill="#666"><path d="M4 0v7L0 3.500z" /></svg>
      </button>
    </div>
  </div>
);

const StatusBar = () => (
  <footer className="flex h-5 shrink-0 items-center border-t border-[#c6c6c6] bg-[#f0f0f0] pr-[14px] pl-[7px] text-[11px] leading-4 text-[#555]">
    <span>Ready</span>
    <span className="ml-auto">Average: 4.666666667</span>
    <span className="ml-4">Count: 30</span>
    <span className="ml-4">Sum: 28</span>
    <div className="ml-[19px] flex h-full">
      <button aria-label="Normal view" className="flex w-[38px] items-center justify-center bg-[#c8c8c8]">
        <svg width="13" height="13" viewBox="0 0 13 13" fill="none" stroke="#666"><path d="M.5.5h12v12H.5zM.5 4.500h12M.5 8.500h12M4.500.5v12M8.500.5v12" /></svg>
      </button>
      <button aria-label="Page layout view" className="flex w-[38px] items-center justify-center">
        <svg width="14" height="13" viewBox="0 0 14 13" fill="none" stroke="#666"><path d="M.5.5h13v12H.5zM3.500 2.500h7v8h-7zM5 4.500h4M5 6.500h4M5 8.500h4" /></svg>
      </button>
      <button aria-label="Page break preview" className="flex w-[38px] items-center justify-center">
        <svg width="14" height="13" viewBox="0 0 14 13" fill="none" stroke="#666"><path d="M.5.5h13v12H.5zM.5 8.500h9v-8M5.500.5v8" /></svg>
      </button>
    </div>
    <button aria-label="Zoom out" className="ml-1">
      <svg width="7" height="2" viewBox="0 0 7 2"><path d="M0 0h7v2H0z" fill="#555" /></svg>
    </button>
    <input
      type="range"
      aria-label="Zoom"
      min="10"
      max="190"
      defaultValue="100"
      className="mx-1 h-3 w-[100px] appearance-none bg-[linear-gradient(#999,#999)] bg-[length:100%_1px] bg-center bg-no-repeat [&::-webkit-slider-thumb]:h-3 [&::-webkit-slider-thumb]:w-1 [&::-webkit-slider-thumb]:appearance-none [&::-webkit-slider-thumb]:bg-[#555]"
    />
    <button aria-label="Zoom in">
      <svg width="8" height="8" viewBox="0 0 8 8"><path d="M0 3h3V0h2v3h3v2H5v3H3V5H0z" fill="#555" /></svg>
    </button>
    <span className="ml-4">100 %</span>
  </footer>
);

// Brand badge in the corner, on top of the status bar
const Watermark = () => (
  <div className="pointer-events-none absolute right-1 bottom-2 flex flex-col items-end">
    <div className="mr-[11px] flex h-[27px] w-[148px] items-center justify-center gap-[5px] rounded-[3px] bg-[#04205f] font-['Lato',sans-serif] text-[19px] leading-5 font-bold text-white">
      365
      <svg width="21" height="17" viewBox="0 0 21 17" fill="#fff"><path d="M0 7h6v10H0zM7.500 3.500h6V17h-6zM15 0h6v17h-6z" /></svg>
      Careers
    </div>
    <div className="-mt-2 flex items-center gap-1 text-[11px] leading-3 text-white/60">
      <svg width="16" height="13" viewBox="0 0 16 13" fill="none" stroke="currentColor" strokeWidth="2"><path d="M1 4c3-3 5-2 4 2s1 6 4 3 4-6 4-8c-1 5-1 9 2 10" /></svg>
      Udemy
    </div>
  </div>
);

const App = () => (
  <div className="relative flex min-h-screen flex-col overflow-hidden border-l border-[#217346] bg-[#e6e6e6] font-['Open_Sans','Segoe_UI',sans-serif] text-[12px]">
    <div className="bg-[#267f49]">
      <TitleBar />
      <MenuTabs />
    </div>
    <Ribbon />
    <FormulaBar />
    <Sheet />
    <SheetTabs />
    <StatusBar />
    <Watermark />
  </div>
);

export default App;
